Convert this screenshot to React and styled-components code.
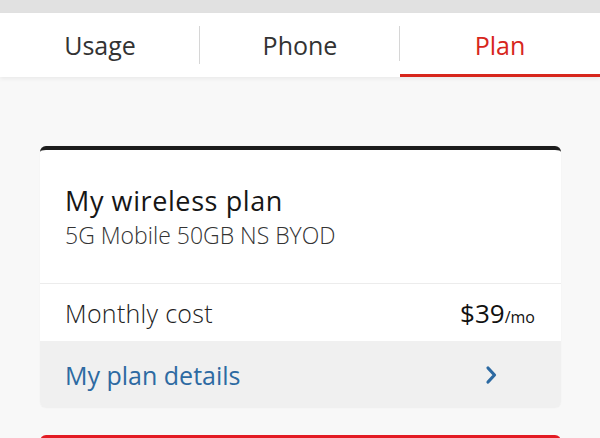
import React from 'react';
import styled, { createGlobalStyle, css } from 'styled-components';

const Global = createGlobalStyle`
  body {
    margin: 0;
    background: #f8f8f8;
    font-family: "Open Sans", "Noto Sans", sans-serif;
    color: #222;
  }
`;

const StatusStrip = styled.div`
  height: 13px;
  background: #e1e1e1;
`;

const TabBar = styled.nav`
  display: grid;
  grid-template-columns: repeat(3, 1fr);
  height: 64px;
  background: #fff;
  box-shadow: 0 2px 4px rgba(0, 0, 0, 0.06);
`;

const Tab = styled.div`
  position: relative;
  display: flex;
  align-items: center;
  justify-content: center;
  font-size: 25px;
  color: #333;
  &:not(:first-child)::before {
    content: '';
    position: absolute;
    left: -1px;
    top: 13px;
    bottom: 13px;
    width: 1px;
    background: #d6d6d6;
  }
  ${props =>
    props.active &&
    css`
      color: #d7261c;
      border-bottom: 3px solid #d7261c;
      padding-top: 3px;
    `}
`;

const Content = styled.main`
  padding: 69px 39px 0 40px;
`;

const Card = styled.section`
  background: #fff;
  border-top: 4px solid #1c1c1c;
  border-radius: 6px;
  overflow: hidden;
  box-shadow: 0 0 1px rgba(0, 0, 0, 0.08);
`;

const Header = styled.div`
  height: 133px;
  padding: 0 25px;
  display: flex;
  flex-direction: column;
  justify-content: center;
  gap: 2px;
  border-bottom: 1px solid #ececec;
`;

const Title = styled.h2`
  margin: 0;
  font-size: 27px;
  font-weight: 500;
  letter-spacing: 0.6px;
  color: #161616;
  line-height: 34px;
`;

const Subtitle = styled.div`
  font-size: 23px;
  font-weight: 300;
  color: #333;
  line-height: 30px;
`;

const Row = styled.div`
  display: flex;
  align-items: center;
  justify-content: space-between;
  padding: 0 26px 0 25px;
  height: ${props => props.h}px;
  background: ${props => (props.muted ? '#f0f0f0' : '#fff')};
`;

const Label = styled.span`
  font-size: 25px;
  font-weight: 300;
  letter-spacing: 0.3px;
  color: ${props => props.color || '#222'};
`;

const LinkLabel = styled(Label)`
  font-weight: 400;
  letter-spacing: 0;
`;

const Price = styled.span`
  font-size: 26px;
  font-weight: 500;
  color: #111;
  small {
    font-size: 16px;
    font-weight: 400;
  }
`;

const Chevron = styled.svg`
  width: 14px;
  height: 20px;
  margin-right: 37px;
`;

const AlertBar = styled.div`
  margin-top: 27px;
  height: 20px;
  background: #e31b23;
  border-radius: 6px 6px 0 0;
`;

export default function App() {
  return (
    <>
      <Global />
      <StatusStrip />
      <TabBar>
        <Tab>Usage</Tab>
        <Tab>Phone</Tab>
        <Tab active>Plan</Tab>
      </TabBar>
      <Content>
        <Card>
          <Header>
            <Title>My wireless plan</Title>
            <Subtitle>5G Mobile 50GB NS BYOD</Subtitle>
          </Header>
          <Row h={57}>
            <Label>Monthly cost</Label>
            <Price>
              $39<small>/mo</small>
            </Price>
          </Row>
          <Row h={67} muted>
            <LinkLabel color="#2d6aa2">My plan details</LinkLabel>
            <Chevron viewBox="0 0 14 20">
              <path d="M4 3l6.5 7L4 17" fill="none" stroke="#2d6aa2" strokeWidth="3.2" strokeLinecap="round" strokeLinejoin="round" />
            </Chevron>
          </Row>
        </Card>
        <AlertBar />
      </Content>
    </>
  );
}
